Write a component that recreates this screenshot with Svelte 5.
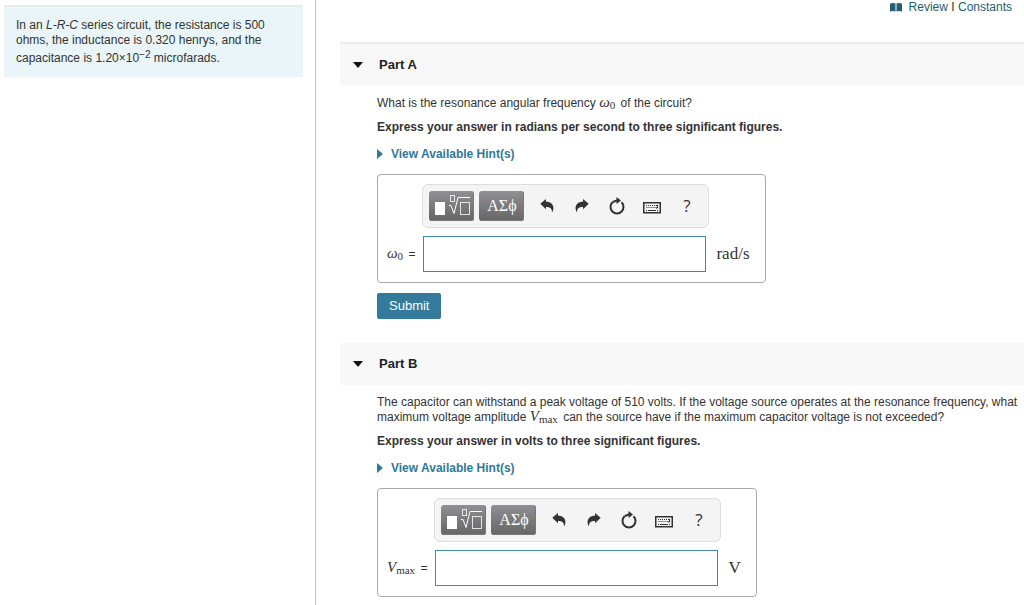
<script lang="ts">
	interface Part {
		id: string;
		title: string;
		symbol: string;
		sub: string;
		unit: string;
		instruction: string;
	}

	const parts: Part[] = [
		{
			id: 'a',
			title: 'Part A',
			symbol: 'ω',
			sub: '0',
			unit: 'rad/s',
			instruction: 'Express your answer in radians per second to three significant figures.'
		},
		{
			id: 'b',
			title: 'Part B',
			symbol: 'V',
			sub: 'max',
			unit: 'V',
			instruction: 'Express your answer in volts to three significant figures.'
		}
	];

	let answers: Record<string, string> = $state({ a: '', b: '' });
</script>

{#snippet variable(symbol: string, sub: string)}
	<span class="math"><i>{symbol}</i><span class="sub">{sub}</span></span>
{/snippet}

{#snippet toolbar(id: string)}
	<div class="toolbar" role="toolbar" aria-label="Equation tools">
		<button class="palette" type="button" aria-label="Templates">
			<svg width="36" height="24" viewBox="0 0 36 24" fill="none" stroke="#fff">
				<rect x="1" y="8" width="10" height="13" fill="#fff" stroke="none" />
				<rect x="16.5" y="1.5" width="4" height="6" stroke-opacity=".8" />
				<path d="M15 11.500h2l3 8 4-16H36" />
				<rect x="26.5" y="8.5" width="9" height="12" stroke-opacity=".8" />
			</svg>
		</button>
		<button class="palette" type="button" aria-label="Symbols">ΑΣϕ</button>
		<button class="tool" type="button" aria-label="Undo">
			<svg width="14" height="14" viewBox="0 0 14 14">
				<path d="M.3 4.800 6 0v2.800c4.800 0 7.800 2.600 7.400 7.200-.1 1.300-.7 2.500-1.400 3.500.1-4-1.500-5.600-6-5.600v2.300z" fill="#333" />
			</svg>
		</button>
		<button class="tool" type="button" aria-label="Redo">
			<svg width="14" height="14" viewBox="0 0 14 14">
				<path d="M13.700 4.800 8 0v2.800C3.200 2.800.2 5.400.6 10c.1 1.300.7 2.500 1.400 3.500-.1-4 1.500-5.600 6-5.600v2.300z" fill="#333" />
			</svg>
		</button>
		<button class="tool" type="button" aria-label="Reset">
			<svg width="16" height="18" viewBox="0 0 16 18">
				<path d="M3.500 5.200A6.500 6.500 0 1 0 12.500 5.200" fill="none" stroke="#333" stroke-width="2" />
				<path d="M7.500 0 12 3.500 7.500 7V4.600L3.500 6.400V4L7.500 2.500z" fill="#333" />
			</svg>
		</button>
		<button class="tool keyboard" type="button" aria-label="Keyboard shortcuts">
			<svg width="18" height="12" viewBox="0 0 18 12" fill="none" stroke="#333">
				<rect x=".75" y=".75" width="16.500" height="10" stroke-width="1.500" />
				<path d="M3 3.500h12M3.500 5.500h11" stroke-dasharray="1 1" />
				<path d="M14.500 3v3H13M5 8.500h8M3 8.500h1M14 8.500h1" />
			</svg>
		</button>
		<button class="tool help" type="button" aria-label="Help for answer {id}">?</button>
	</div>
{/snippet}

<div class="page">
	<aside>
		<p class="problem">
			In an <i>L-R-C</i> series circuit, the resistance is 500 ohms, the inductance is 0.320 henrys, and the
			capacitance is 1.20×10<sup>−2</sup> microfarads.
		</p>
	</aside>

	<main>
		<nav>
			<svg width="12" height="9" viewBox="0 0 12 9" fill="#255c72">
				<path d="M0 .6Q3-.5 5.500.6V8.500Q3 7.700 0 8.500zM6.500.6Q9-.5 12 .6V8.500Q9 7.700 6.500 8.500z" />
			</svg>
			<span><a href="#review">Review</a> <span class="bar">I</span> <a href="#constants">Constants</a></span>
		</nav>

		{#each parts as part (part.id)}
			<section>
				<header>
					<svg width="10" height="6" viewBox="0 0 10 6"><path d="M0 0h10L5 6z" fill="#111" /></svg>
					<h2>{part.title}</h2>
				</header>
				<form class="body" onsubmit={(event) => event.preventDefault()}>
					<p>
						{#if part.id === 'a'}
							What is the resonance angular frequency <span class="inline">{@render variable('ω', '0')}</span> of
							the circuit?
						{:else}
							The capacitor can withstand a peak voltage of 510 volts. If the voltage source operates at the
							resonance frequency, what maximum voltage amplitude
							<span class="inline">{@render variable('V', 'max')}</span> can the source have if the maximum
							capacitor voltage is not exceeded?
						{/if}
					</p>
					<p class="instruction">{part.instruction}</p>
					<a class="hints" href="#hints-{part.id}">
						<svg width="6" height="12" viewBox="0 0 6 12"><path d="M0 0l6 5-6 5z" fill="#2f7899" /></svg>
						View Available Hint(s)
					</a>
					<div class="answer">
						{@render toolbar(part.id)}
						<label for="answer-{part.id}">{@render variable(part.symbol, part.sub)} <span class="equals">=</span></label>
						<input id="answer-{part.id}" type="text" bind:value={answers[part.id]} />
						<span class="unit">{part.unit}</span>
					</div>
					<button class="submit" type="submit">Submit</button>
				</form>
			</section>
		{/each}
	</main>
</div>

<style>
	:global(body) {
		margin: 0;
		background: #fff;
	}

	.page {
		display: flex;
		height: 100vh;
		font: 12px/15px "Liberation Sans", Arial, sans-serif;
		color: #333;
	}

	aside {
		flex: 0 0 315px;
		box-sizing: border-box;
		padding: 5px 12px 0 4px;
	}

	.problem {
		margin: 0;
		padding: 11px 34px 11px 12px;
		border-top: 2px solid #e6edef;
		background: #e9f5f8;
	}

	sup {
		font-size: 10px;
		line-height: 14px;
		vertical-align: 4px;
	}

	main {
		flex: 1;
		min-width: 0;
		padding-left: 24px;
		border-left: 1px solid #b9c3cb;
		overflow-y: auto;
		scrollbar-width: none;
	}

	nav {
		display: flex;
		align-items: center;
		justify-content: flex-end;
		gap: 7px;
		height: 14px;
		padding-right: 12px;
		margin-bottom: 28px;
	}

	nav a {
		color: #255c72;
		text-decoration: none;
	}

	section header {
		display: flex;
		align-items: center;
		gap: 16px;
		height: 42px;
		padding-left: 13px;
		background: #f8f8f8;
	}

	section:first-of-type header {
		border-top: 2px solid #ececec;
	}

	h2 {
		margin: 0;
		font-size: 13px;
		line-height: 16px;
		color: #222;
	}

	.body {
		display: flex;
		flex-direction: column;
		align-items: flex-start;
		padding: 10px 0 24px 37px;
	}

	p {
		margin: 0 0 9px;
	}

	.instruction {
		font-weight: bold;
	}

	.inline {
		margin-right: 2px;
	}

	.math {
		font-family: "Liberation Serif", "Times New Roman", serif;
		font-size: 15px;
		line-height: 1px;
	}

	.sub {
		font-size: 11px;
		line-height: 1px;
		vertical-align: -2px;
	}

	.hints {
		display: flex;
		align-items: center;
		gap: 8px;
		margin: 3px 0 12px;
		font-weight: bold;
		color: #2f7899;
		text-decoration: none;
	}

	.answer {
		display: grid;
		grid-template-columns: auto 287px auto;
		row-gap: 8px;
		align-items: center;
		padding: 9px 15px 10px 9px;
		border: 1px solid #aaa;
		border-radius: 4px;
	}

	.toolbar {
		grid-column: 2;
		box-sizing: border-box;
		display: flex;
		align-items: center;
		height: 44px;
		padding: 0 6px;
		border: 1px solid #ddd;
		border-radius: 6px;
		background: #f4f4f4;
	}

	.toolbar button {
		display: flex;
		align-items: center;
		justify-content: center;
		flex: none;
		height: 30px;
		padding: 0;
		border: 0;
		background: none;
	}

	.toolbar .palette {
		width: 45px;
		margin-right: 5px;
		border-radius: 3px;
		background: linear-gradient(#8f8f95, #666);
		box-shadow: inset -1px -1px #777;
		font: 16px/20px "Liberation Serif", serif;
		color: #fff;
	}

	.toolbar .tool {
		width: 35px;
		color: #333;
	}

	.toolbar .keyboard {
		padding-top: 3px;
	}

	.toolbar .help {
		font: 17px/20px "Open Sans", sans-serif;
	}

	label {
		grid-column: 1;
		padding-right: 7px;
		white-space: nowrap;
	}

	.equals {
		margin-left: 2px;
	}

	.answer input {
		box-sizing: border-box;
		width: 283px;
		height: 36px;
		margin-left: 1px;
		padding: 4px 8px;
		border: 1px solid #4289a8;
		font-size: 15px;
	}

	.unit {
		padding-left: 7px;
		font: 17px/20px "Liberation Serif", serif;
	}

	.submit {
		height: 26px;
		margin-top: 10px;
		padding: 0 12px;
		border: 0;
		border-radius: 2px;
		background: #337a9b;
		color: #fff;
		font: 13px/16px "Liberation Sans", Arial, sans-serif;
	}
</style>
